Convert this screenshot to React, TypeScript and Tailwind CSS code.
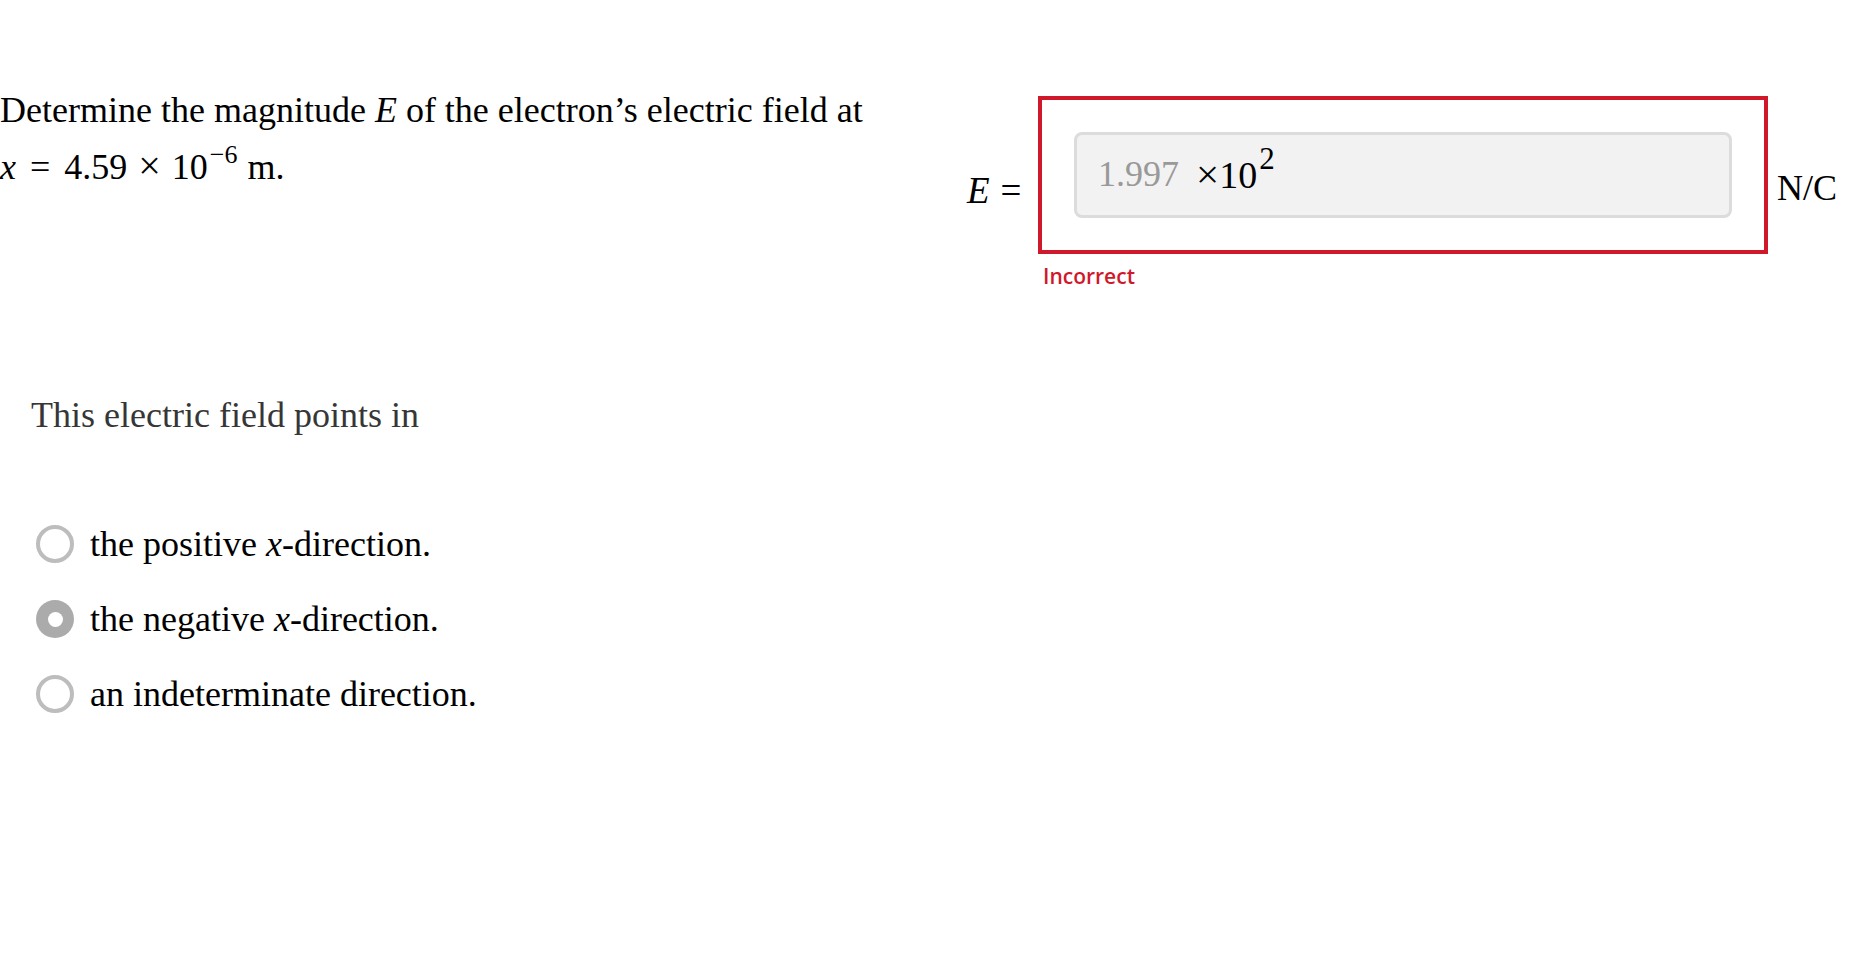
import { Fragment } from "react"

const options = [
  { id: "pos", label: "the positive", dir: true, selected: false },
  { id: "neg", label: "the negative", dir: true, selected: true },
  { id: "ind", label: "an indeterminate direction.", dir: false, selected: false },
]

function Radio({ selected }: { selected: boolean }) {
  if (selected) {
    return (
      <span className="flex h-[38px] w-[38px] shrink-0 items-center justify-center rounded-full bg-[#ababab]">
        <span className="h-[15px] w-[15px] rounded-full bg-white" />
      </span>
    )
  }
  return <span className="h-[38px] w-[38px] shrink-0 rounded-full border-4 border-[#bdbdbd] bg-white" />
}

export default function App() {
  return (
    <div className="h-[976px] w-[1857px] overflow-hidden bg-white font-['Liberation_Serif',serif] text-black">
      <div className="flex h-[397px] items-start">
        {/* question */}
        <div className="w-[967px] pt-[82px] text-[36px] leading-[56px]">
          <p>
            Determine the magnitude <i>E</i> of the electron’s electric field at
          </p>
          <p>
            <i>x</i>
            <span className="mx-[14px]">=</span>4.59<span className="mx-[11px] text-[40px]">×</span>10
            <sup className="top-[-16px] ml-[2px] text-[26px]">−6</sup>
            <span className="ml-[10px]">m.</span>
          </p>
        </div>

        {/* answer */}
        <div className="flex flex-col pt-[96px]">
          <div className="flex items-start">
            <span className="mt-[76px] w-[71px] text-[37px] leading-none">
              <i>E</i>
              <span className="ml-[11px]">=</span>
            </span>
            <div className="h-[158px] w-[730px] border-4 border-[#d0182b] p-[32px]">
              <div className="flex h-full items-start rounded-[8px] border-[3px] border-[#dcdcdc] bg-[#f2f2f2] pl-[21px] pt-[21px] text-[36px] leading-none">
                <span className="text-[#999999]">1.997</span>
                <span className="-mt-[2px] ml-[17px] text-[38px] leading-none">
                  <span className="text-[41px]">×</span>10<sup className="top-[-19px] ml-[2px] text-[31px]">2</sup>
                </span>
              </div>
            </div>
            <span className="ml-[9px] mt-[74px] text-[36px] leading-none">N/C</span>
          </div>
          <span className="ml-[76px] mt-[12px] font-['Open_Sans',sans-serif] text-[21px] font-semibold leading-none text-[#d0182b]">
            Incorrect
          </span>
        </div>
      </div>

      <p className="pl-[31px] text-[36px] leading-none text-[#363636]">This electric field points in</p>

      <div className="mt-[92px] flex flex-col gap-[37px] pl-[36px]">
        {options.map((o) => (
          <label key={o.id} className="flex h-[38px] items-center gap-[16px] text-[36px] leading-none">
            <Radio selected={o.selected} />
            <span>
              {o.dir ? (
                <Fragment>
                  {o.label} <i>x</i>-direction.
                </Fragment>
              ) : (
                o.label
              )}
            </span>
          </label>
        ))}
      </div>
    </div>
  )
}
